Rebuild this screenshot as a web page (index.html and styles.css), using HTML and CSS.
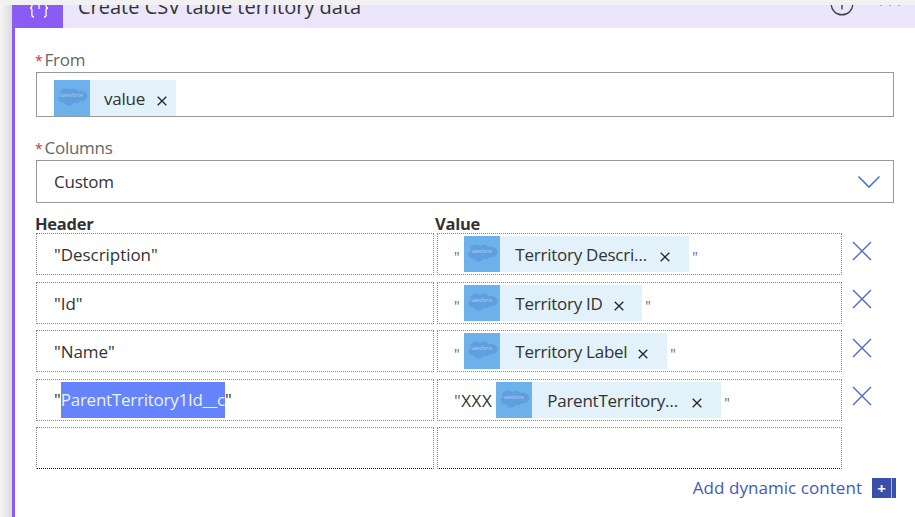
FILE: index.html
```html
<!DOCTYPE html>
<html lang="en">
<head>
<meta charset="utf-8">
<title>Create CSV table territory data</title>
<link rel="stylesheet" href="styles.css">
</head>
<body>
<svg class="defs" width="0" height="0" aria-hidden="true">
  <symbol id="sf" viewBox="0 0 36 36">
    <rect width="36" height="36" fill="#6cb1e9"/>
    <path transform="translate(1.500 2.800) scale(.92 .79)" d="M15 9.500c1.200-1.300 2.900-2 4.600-2 2.400 0 4.400 1.300 5.500 3.200 1-.4 1.800-.6 2.800-.6 3.800 0 6.600 3 6.600 6.700s-2.800 6.700-6.600 6.700c-.5 0-.9 0-1.300-.1-.9 1.500-2.500 2.500-4.400 2.500-.8 0-1.500-.2-2.200-.5-.9 2-2.900 3.500-5.200 3.500-2.500 0-4.500-1.500-5.300-3.700-.4.100-.7.100-1.100.1-2.900 0-5.100-2.400-5.100-5.300 0-2 1-3.700 2.600-4.600-.3-.8-.5-1.600-.5-2.500 0-3.200 2.600-5.800 5.900-5.800 1.900 0 3.600.9 4.700 2.400z" fill="#5f9fe0"/>
    <text x="17.500" y="17" text-anchor="middle" class="sf-text">salesforce</text>
  </symbol>
  <symbol id="chipx" viewBox="0 0 10 10">
    <path d="M.7.700l8.600 8.600M9.300.700L.7 9.300" fill="none" stroke="#222" stroke-width="1.300"/>
  </symbol>
  <symbol id="delx" viewBox="0 0 20 20">
    <path d="M1 1l18 18M19 1L1 19" fill="none" stroke="#4a6bc6" stroke-width="1.400"/>
  </symbol>
</svg>

<div class="strip"></div>
<div class="shell">
  <div class="shade"></div>
  <main class="card">
    <header class="head">
      <div class="head-icon">
        <svg width="22" height="22" viewBox="0 0 22 22"><path d="M6 1C3 1 4 5 4 8c0 2-.6 3-2 3 1.400 0 2 1 2 3 0 3-1 6 2 6M16 1c3 0 2 4 2 7 0 2 .6 3 2 3-1.400 0-2 1-2 3 0 3 1 6-2 6M11 7v5" fill="none" stroke="#fff" stroke-width="1.300"/></svg>
      </div>
      <h1 class="title">Create CSV table territory data</h1>
      <svg class="info" width="24" height="24" viewBox="0 0 24 24"><circle cx="12" cy="12" r="10.800" fill="none" stroke="#444" stroke-width="1.400"/><path d="M12 10.500v7M12 6.500v2" stroke="#444" stroke-width="1.400"/></svg>
      <div class="dots"><i></i><i></i><i></i></div>
    </header>

    <section class="body">
      <div class="field-label from-label"><span class="req">*</span>From</div>
      <div class="input from">
        <span class="chip chip-value">
          <svg class="sf" width="36" height="36"><use href="#sf"/></svg>
          <span class="chip-text">value</span>
          <svg class="cx" width="10" height="10"><use href="#chipx"/></svg>
        </span>
      </div>

      <div class="field-label col-label"><span class="req">*</span>Columns</div>
      <div class="input select">
        <span>Custom</span>
        <svg width="24" height="14" viewBox="0 0 24 14"><path d="M1.500 1.500L12 12 22.500 1.500" fill="none" stroke="#4a77d4" stroke-width="1.600"/></svg>
      </div>

      <div class="table-head"><div class="th th-first">Header</div><div class="th">Value</div></div>

      <div class="row">
        <div class="cell left"><span class="plain">"Description"</span></div>
        <div class="cell right">
          <span class="q">"</span>
          <span class="chip c1"><svg class="sf" width="36" height="36"><use href="#sf"/></svg><span class="chip-text">Territory Descri…</span><svg class="cx" width="10" height="10"><use href="#chipx"/></svg></span>
          <span class="q q-end">"</span>
        </div>
        <svg class="del" width="20" height="20"><use href="#delx"/></svg>
      </div>

      <div class="row">
        <div class="cell left"><span class="plain">"Id"</span></div>
        <div class="cell right">
          <span class="q">"</span>
          <span class="chip c2"><svg class="sf" width="36" height="36"><use href="#sf"/></svg><span class="chip-text">Territory ID</span><svg class="cx" width="10" height="10"><use href="#chipx"/></svg></span>
          <span class="q q-end">"</span>
        </div>
        <svg class="del" width="20" height="20"><use href="#delx"/></svg>
      </div>

      <div class="row">
        <div class="cell left"><span class="plain">"Name"</span></div>
        <div class="cell right">
          <span class="q">"</span>
          <span class="chip c3"><svg class="sf" width="36" height="36"><use href="#sf"/></svg><span class="chip-text">Territory Label</span><svg class="cx" width="10" height="10"><use href="#chipx"/></svg></span>
          <span class="q q-end">"</span>
        </div>
        <svg class="del" width="20" height="20"><use href="#delx"/></svg>
      </div>

      <div class="row">
        <div class="cell left"><span class="plain">"<span class="sel">ParentTerritory1Id__c</span>"</span></div>
        <div class="cell right">
          <span class="xxx"><span class="q-in">"</span>XXX</span>
          <span class="chip c4"><svg class="sf" width="36" height="36"><use href="#sf"/></svg><span class="chip-text">ParentTerritory…</span><svg class="cx" width="10" height="10"><use href="#chipx"/></svg></span>
          <span class="q q-end">"</span>
        </div>
        <svg class="del" width="20" height="20"><use href="#delx"/></svg>
      </div>

      <div class="row last">
        <div class="cell left"></div>
        <div class="cell right"></div>
      </div>

      <div class="add">
        <span class="add-text">Add dynamic content</span>
        <span class="add-btn"><b>+</b></span>
      </div>
    </section>
  </main>
</div>
</body>
</html>
```

FILE: styles.css
```css
* { box-sizing: border-box; }
html, body { margin: 0; padding: 0; }
body {
  width: 915px;
  height: 517px;
  overflow: hidden;
  background: #fff;
  font-family: "Open Sans", "Noto Sans", sans-serif;
  color: #333;
}
.defs { position: absolute; }
.sf-text { font: 4.800px "Open Sans", sans-serif; fill: #aed0f1; }
.strip { height: 5px; background: #f1f1f1; }
.shell { display: flex; height: 512px; }
.shade { width: 12px; background: linear-gradient(to right, #f6f6f6, #dcdcdc); }
.card { flex: 1; border-left: 3px solid #8a5bf5; min-width: 0; }

.head {
  height: 23px;
  background: #ece6fd;
  display: flex;
  align-items: flex-end;
  overflow: hidden;
  position: relative;
}
.head-icon {
  width: 48px;
  height: 23px;
  margin-right: 15px;
  background: #8a5bf5;
  flex: none;
  display: flex;
  justify-content: flex-start;
  align-items: flex-end;
  padding: 0 0 9px 13px;
}
.head-icon svg { flex: none; margin-top: -12px; }
.title {
  margin: 0 0 9px;
  font-size: 20px;
  line-height: 24px;
  font-weight: 400;
  color: #333;
  flex: none;
}
.info { position: absolute; right: 61px; top: -13px; }
.dots { position: absolute; right: 15px; top: 0; display: flex; gap: 7px; }
.dots i { width: 2px; height: 1px; background: #aaa; display: block; }

.body { padding-left: 21px; }
.field-label {
  font-size: 17px;
  line-height: 22px;
  color: #666;
  letter-spacing: -.25px;
}
.from-label { margin-top: 21px; height: 23px; }
.col-label { margin-top: 20px; height: 23px; }
.req { color: #c8354b; margin-right: 2px; margin-left: -1px; font-size: 14px; }
.input {
  width: 858px;
  border: 1px solid #999;
  background: #fff;
}
.from { height: 45px; padding: 7px 0 0 17px; display: flex; }
.select {
  height: 43px;
  padding: 0 12px 0 17px;
  display: flex;
  align-items: center;
  justify-content: space-between;
  font-size: 17px;
  color: #333;
  letter-spacing: -.25px;
}
.chip {
  height: 36px;
  background: #e3f2fa;
  display: inline-flex;
  align-items: center;
  flex: none;
}
.sf { flex: none; display: block; }
.chip-text {
  font-size: 17px;
  color: #333;
  margin-left: 15px;
  white-space: nowrap;
  letter-spacing: -.25px;
  flex: none;
  padding-top: 1px;
}
.cx { flex: none; margin-top: 6px; }
.chip-value { width: 122px; }
.chip-value .chip-text { margin-left: 14px; }
.chip-value .cx { margin-left: 12px; }
.c1 { width: 225px; }
.c1 .cx { margin-left: 13px; }
.c2 { width: 178px; }
.c2 .cx { margin-left: 11px; }
.c3 { width: 203px; }
.c3 .cx { margin-left: 11px; }
.c4 { width: 225px; }
.c4 .chip-text { margin-left: 15px; }
.c4 .cx { margin-left: 14px; }

.table-head {
  display: flex;
  height: 30px;
  padding-top: 11px;
  width: 806px;
}
.th {
  width: 399px;
  font-size: 16.500px;
  font-weight: 700;
  line-height: 20px;
  color: #333;
  letter-spacing: -.25px;
}
.th-first { margin-left: -1px; width: 400px; }
.row {
  display: flex;
  height: 48.500px;
  align-items: flex-start;
}
.cell {
  height: 42px;
  border: 1px dotted #888;
  display: flex;
  align-items: center;
  font-size: 17px;
  letter-spacing: -.25px;
}
.row .left { width: 398px; padding-left: 17px; margin-right: 3px; }
.row .right { width: 405px; padding-left: 16px; gap: 5px; }
.last .cell { border-bottom-color: #222; }
.plain { white-space: nowrap; color: #333; padding-top: 1px; letter-spacing: -.05px; }
.sel {
  background: #6583fb;
  color: #eef2ff;
  display: inline-block;
  line-height: 36px;
  letter-spacing: -.25px;
}
.q { color: #666; font-size: 14px; line-height: 14px; padding-top: 6px; }
.q-end { margin-left: -2px; }
.xxx { white-space: nowrap; color: #333; padding-top: 1px; letter-spacing: .5px; margin-right: -1px; }
.q-in { color: #666; }
.del { flex: none; margin: 7.500px 0 0 10px; }

.add {
  width: 860px;
  display: flex;
  align-items: center;
  justify-content: flex-end;
  margin-top: .5px;
  gap: 10px;
}
.add-text { font-size: 17px; color: #3e5bb8; letter-spacing: .05px; }
.add-btn {
  width: 24px;
  height: 20px;
  background: #3a4fa8;
  display: flex;
  align-items: center;
  color: #fff;
  position: relative;
}
.add-btn b { font-size: 15px; line-height: 20px; width: 19px; text-align: center; }
.add-btn::after {
  content: "";
  position: absolute;
  left: 19px;
  top: 0;
  width: 1px;
  height: 20px;
  background: #a9b5e0;
}
```
